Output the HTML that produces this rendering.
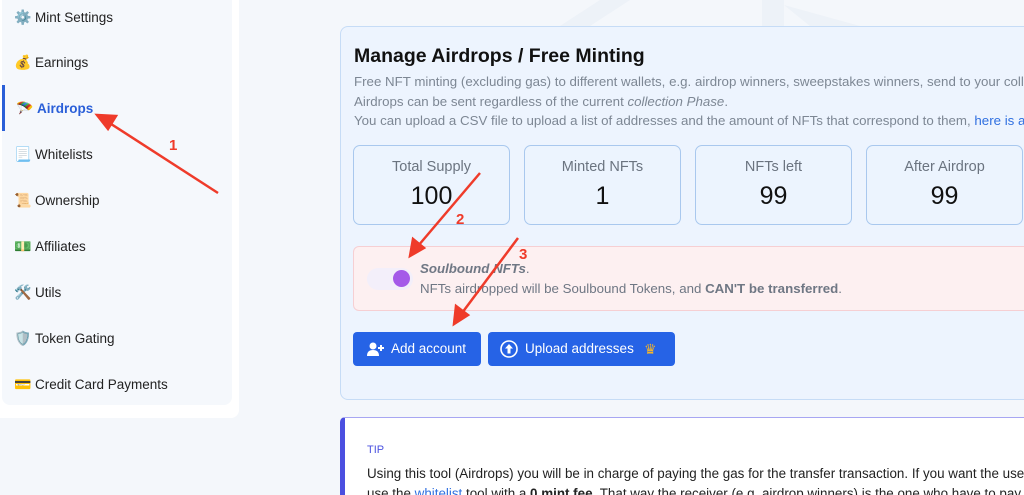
<!DOCTYPE html>
<html><head><meta charset="utf-8"><style>
*{box-sizing:border-box;margin:0;padding:0}
html,body{width:1024px;height:495px;overflow:hidden}
body{background:#f4f7fb;font-family:"Liberation Sans",sans-serif;position:relative}
.outer{position:absolute;left:0;top:-10px;width:239px;height:428px;background:#fff;border-radius:0 0 8px 0}
.side{position:absolute;left:2px;top:-10px;width:230px;height:415px;background:#f5f8fc;border-radius:0 0 8px 8px}
.item{position:absolute;left:14px;font-size:13.5px;color:#222;height:20px;line-height:20px;white-space:nowrap}
.item .i{display:inline-block;width:21px;font-size:14px}
.act{color:#2a5fd8;font-weight:bold}
.bar{position:absolute;left:2px;top:85px;width:3px;height:46px;background:#2a5fd8}
.card{position:absolute;left:340px;top:26px;width:700px;height:374px;background:#edf4fe;border:1px solid #c6dcf6;border-radius:8px}
h1{position:absolute;left:354px;top:45px;font-size:19.5px;font-weight:bold;color:#111;white-space:nowrap}
.desc{position:absolute;left:354px;top:72px;font-size:13.3px;color:#7d8794;line-height:19.5px;white-space:nowrap}
.desc a{color:#2f6fe0;text-decoration:none}
.stat{position:absolute;top:145px;width:157px;height:80px;border:1px solid #a9c8ee;border-radius:7px;background:#ecf4fe;text-align:center}
.stat .l{margin-top:13px;font-size:14.5px;color:#6b7480}
.stat .v{margin-top:7px;font-size:25px;color:#111}
.alert{position:absolute;left:353px;top:246px;width:690px;height:65px;background:#fdf0f1;border:1px solid #f6cfd3;border-radius:6px}
.tog{position:absolute;left:367px;top:268px;width:46px;height:22px;border-radius:11px;background:#f3effa}
.knob{position:absolute;left:393px;top:270px;width:17px;height:17px;border-radius:50%;background:#a55ae8}
.at{position:absolute;left:420px;top:259px;font-size:13.3px;color:#6f7784;line-height:20px;white-space:nowrap}
.btn{position:absolute;top:332px;height:34px;background:#2663e6;border-radius:4px;color:#fff;font-size:13.5px;line-height:34px;white-space:nowrap}
.tip{position:absolute;left:340px;top:417px;width:700px;height:90px;background:#fff;border-left:5px solid #4b4fe0;border-top:1.5px solid #a7a6f2;border-radius:5px 0 0 0}
.tip .t{position:absolute;left:22px;top:26px;font-size:11px;color:#4b52e0}
.tip .p{position:absolute;left:22px;top:46px;font-size:13.4px;color:#222;line-height:20px;white-space:nowrap}
.num{position:absolute;color:#ef3b2a;font-weight:bold;font-size:15px}
</style></head><body>
<svg style="position:absolute;left:560px;top:0" width="464" height="30"><path d="M0 26 L40 0 L70 0 L30 26Z" fill="#edf2f8"/><rect x="202" y="0" width="22" height="26" fill="#edf2f8"/><path d="M224 5 L300 26 L250 26Z" fill="#edf2f8"/></svg>
<div class="outer"></div><div class="side"></div><div class="bar"></div>
<div class="item" style="top:7px"><span class="i">⚙️</span>Mint Settings</div>
<div class="item" style="top:52px"><span class="i">💰</span>Earnings</div>
<div class="item act" style="top:98px;left:16px"><span class="i">🪂</span>Airdrops</div>
<div class="item" style="top:144px"><span class="i">📃</span>Whitelists</div>
<div class="item" style="top:190px"><span class="i">📜</span>Ownership</div>
<div class="item" style="top:236px"><span class="i">💵</span>Affiliates</div>
<div class="item" style="top:282px"><span class="i">🛠️</span>Utils</div>
<div class="item" style="top:328px"><span class="i">🛡️</span>Token Gating</div>
<div class="item" style="top:374px"><span class="i">💳</span>Credit Card Payments</div>
<div class="card"></div>
<h1>Manage Airdrops / Free Minting</h1>
<div class="desc">Free NFT minting (excluding gas) to different wallets, e.g. airdrop winners, sweepstakes winners, send to your collaborators<br>Airdrops can be sent regardless of the current <i>collection Phase</i>.<br>You can upload a CSV file to upload a list of addresses and the amount of NFTs that correspond to them, <a>here is an example</a></div>
<div class="stat" style="left:353px"><div class="l">Total Supply</div><div class="v">100</div></div>
<div class="stat" style="left:524px"><div class="l">Minted NFTs</div><div class="v">1</div></div>
<div class="stat" style="left:695px"><div class="l">NFTs left</div><div class="v">99</div></div>
<div class="stat" style="left:866px"><div class="l">After Airdrop</div><div class="v">99</div></div>
<div class="alert"></div><div class="tog"></div><div class="knob"></div>
<div class="at"><b><i>Soulbound NFTs</i></b>.<br>NFTs airdropped will be Soulbound Tokens, and <b>CAN'T be transferred</b>.</div>
<div class="btn" style="left:353px;width:128px"><svg style="position:absolute;left:14px;top:10px" width="18" height="14" viewBox="0 0 18 14"><circle cx="6" cy="4" r="3.5" fill="#fff"/><path d="M0 14 Q0 8 6 8 Q12 8 12 14Z" fill="#fff"/><path d="M14 3v6M11 6h6" stroke="#fff" stroke-width="2"/></svg><span style="position:absolute;left:38px">Add account</span></div>
<div class="btn" style="left:488px;width:187px"><svg style="position:absolute;left:12px;top:8px" width="18" height="18" viewBox="0 0 18 18"><circle cx="9" cy="9" r="8" fill="none" stroke="#fff" stroke-width="1.6"/><path d="M9 4 L13 8.5 H10.5 V13.5 H7.5 V8.5 H5Z" fill="#fff"/></svg><span style="position:absolute;left:37px">Upload addresses</span><span style="position:absolute;left:156px;color:#f5b52a;font-size:14px">♛</span></div>
<div class="tip"><div class="t">TIP</div><div class="p">Using this tool (Airdrops) you will be in charge of paying the gas for the transfer transaction. If you want the users to pay the gas,<br>use the <a style="color:#2f6fe0;text-decoration:underline">whitelist</a> tool with a <b>0 mint fee</b>. That way the receiver (e.g. airdrop winners) is the one who have to pay the gas.</div></div>
<svg style="position:absolute;left:0;top:0" width="1024" height="495">
<g stroke="#ef3b2a" stroke-width="2.5" fill="#ef3b2a">
<line x1="218" y1="193" x2="108" y2="122"/><path d="M97 115 L116 116 L108 129Z"/>
<line x1="480" y1="173" x2="418" y2="246"/><path d="M410 256 L413 239 L424 248Z"/>
<line x1="518" y1="238" x2="462" y2="313"/><path d="M454 324 L456 306 L468 315Z"/>
</g></svg>
<div class="num" style="left:169px;top:137px">1</div>
<div class="num" style="left:456px;top:211px">2</div>
<div class="num" style="left:519px;top:246px">3</div>
</body></html>
